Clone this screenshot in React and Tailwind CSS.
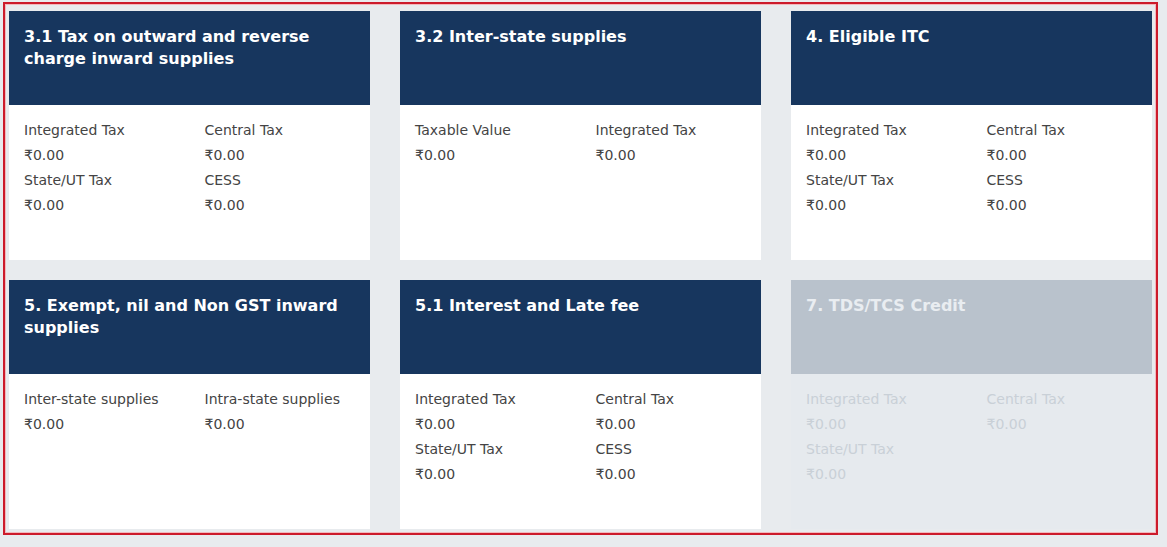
import React from 'react';

const cards = [
  {
    title: '3.1 Tax on outward and reverse charge inward supplies',
    fields: [['Integrated Tax', 'Central Tax'], ['State/UT Tax', 'CESS']],
  },
  {
    title: '3.2 Inter-state supplies',
    fields: [['Taxable Value', 'Integrated Tax']],
  },
  {
    title: '4. Eligible ITC',
    fields: [['Integrated Tax', 'Central Tax'], ['State/UT Tax', 'CESS']],
  },
  {
    title: '5. Exempt, nil and Non GST inward supplies',
    fields: [['Inter-state supplies', 'Intra-state supplies']],
  },
  {
    title: '5.1 Interest and Late fee',
    fields: [['Integrated Tax', 'Central Tax'], ['State/UT Tax', 'CESS']],
  },
  {
    title: '7. TDS/TCS Credit',
    fields: [['Integrated Tax', 'Central Tax'], ['State/UT Tax', null]],
    disabled: true,
  },
];

const Card = ({ title, fields, disabled }) => (
  <div className="flex flex-col">
    <div
      className={`h-[94px] px-[15px] pt-[15px] text-[16px] leading-[22px] font-bold ${
        disabled ? 'bg-[#b9c2cc] text-[#e9edf1]' : 'bg-[#17365e] text-white'
      }`}
    >
      {title}
    </div>
    <div
      className={`h-[155px] pt-[13px] text-[14px] leading-[25px] ${
        disabled ? 'bg-[#e6eaee] text-[#c9d0d7]' : 'bg-white text-[#444444]'
      }`}
    >
      {fields.map((row, i) => (
        <div key={i} className="grid grid-cols-2">
          {row.map((label, j) => (
            <div key={j} className="px-[15px]">
              {label && (
                <>
                  <div>{label}</div>
                  <div>₹0.00</div>
                </>
              )}
            </div>
          ))}
        </div>
      ))}
    </div>
  </div>
);

export default function App() {
  return (
    <div
      className="w-[1167px] h-[547px] bg-[#e8ebee] pl-[3px] pt-[2px]"
      style={{ fontFamily: '"DejaVu Sans", Verdana, "Noto Sans", sans-serif' }}
    >
      <div className="w-[1155px] h-[533px] border-2 border-[#cc1b2b] shadow-[inset_0_0_0_1px_#f2b9bd] pl-[4px] pr-[4px] pt-[7px] overflow-hidden">
        <div className="grid grid-cols-3 gap-x-[30px] gap-y-[20px] w-[1143px]">
          {cards.map((c, i) => (
            <Card key={i} {...c} />
          ))}
        </div>
      </div>
    </div>
  );
}
